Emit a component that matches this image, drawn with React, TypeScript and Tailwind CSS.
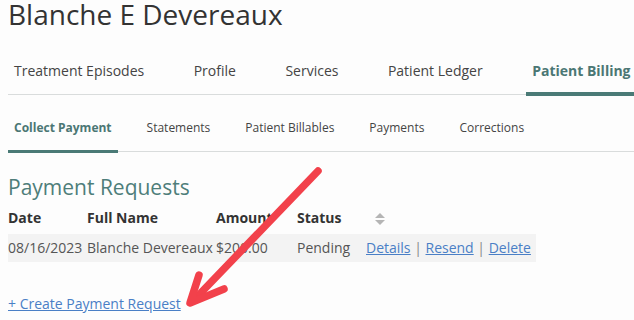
export default function App() {
  const tabs = ["Treatment Episodes", "Profile", "Services", "Patient Ledger", "Patient Billing"]
  const subTabs = ["Collect Payment", "Statements", "Patient Billables", "Payments", "Corrections"]

  return (
    <div
      className="relative w-[634px] h-[320px] overflow-hidden bg-[#fdfdfd] text-[#444]"
      style={{ fontFamily: '"Open Sans", "Liberation Sans", sans-serif' }}
    >
      {/* Patient name */}
      <h1 className="pl-[8px] text-[28px] leading-[30px] text-[#333] -mt-[1px]">Blanche E Devereaux</h1>

      {/* Main tabs */}
      <div className="ml-[8px] mt-[24px] flex gap-[37.5px] border-b border-[#d9dcdc] whitespace-nowrap">
        {tabs.map((t) => (
          <div
            key={t}
            className={`px-[6px] pt-[8px] pb-[11px] text-[14px] leading-[20px] -mb-[2px] border-b-[4px] ${
              t === "Patient Billing"
                ? "font-bold text-[#4b7774] border-[#4a7a76] pr-[20px]"
                : "border-transparent text-[#444]"
            }`}
          >
            {t}
          </div>
        ))}
      </div>

      {/* Sub tabs */}
      <div className="ml-[8px] mt-[24px] flex gap-[23px] border-b border-[#d9dcdc] whitespace-nowrap">
        {subTabs.map((t) => (
          <div
            key={t}
            className={`px-[6px] pb-[13px] text-[12px] leading-[18px] -mb-[2px] border-b-[3px] ${
              t === "Collect Payment"
                ? "font-bold text-[#4b7774] border-[#4a7a76]"
                : "border-transparent text-[#444]"
            }`}
          >
            {t}
          </div>
        ))}
      </div>

      {/* Payment requests */}
      <div className="px-[8px]">
        <h2 className="mt-[21px] text-[21px] leading-[28px] text-[#4e7e7a]">Payment Requests</h2>

        <table className="mt-[1px] text-[14px] leading-[20px] border-collapse">
          <thead>
            <tr className="font-bold text-[#333]">
              <th className="text-left font-bold p-0 pr-[4px] h-[32px] w-[79px]">Date</th>
              <th className="text-left font-bold p-0 w-[129px]">Full Name</th>
              <th className="text-left font-bold p-0 w-[81px]">Amount</th>
              <th className="text-left font-bold p-0 w-[69px]">Status</th>
              <th className="text-left p-0 pl-[8px]">
                <svg width="12" height="14" viewBox="0 0 12 14" className="inline-block">
                  <path d="M6 1 L11 6 L1 6 Z" fill="#b5b5b5" />
                  <path d="M6 13 L11 8 L1 8 Z" fill="#b5b5b5" />
                </svg>
              </th>
            </tr>
          </thead>
          <tbody>
            <tr className="bg-[#f3f3f3] text-[#555]">
              <td className="p-0 h-[28px]">08/16/2023</td>
              <td className="p-0">Blanche Devereaux</td>
              <td className="p-0">$200.00</td>
              <td className="p-0">Pending</td>
              <td className="p-0 pr-[5px] whitespace-nowrap">
                <span className="text-[#4a7fc6] underline">Details</span>
                <span className="text-[#888]"> | </span>
                <span className="text-[#4a7fc6] underline">Resend</span>
                <span className="text-[#888]"> | </span>
                <span className="text-[#4a7fc6] underline">Delete</span>
              </td>
            </tr>
          </tbody>
        </table>

        <div className="mt-[32px] text-[14px] leading-[20px] text-[#4a7fc6] underline">+ Create Payment Request</div>
      </div>

      {/* Annotation arrow */}
      <svg className="absolute left-0 top-0 pointer-events-none" width="634" height="320">
        <g stroke="#f2414b" strokeWidth="7.5" strokeLinecap="round" strokeLinejoin="round" fill="none">
          <line x1="318" y1="171" x2="193" y2="301" />
          <polyline points="199,275 190,303 224,289" />
        </g>
      </svg>
    </div>
  )
}
